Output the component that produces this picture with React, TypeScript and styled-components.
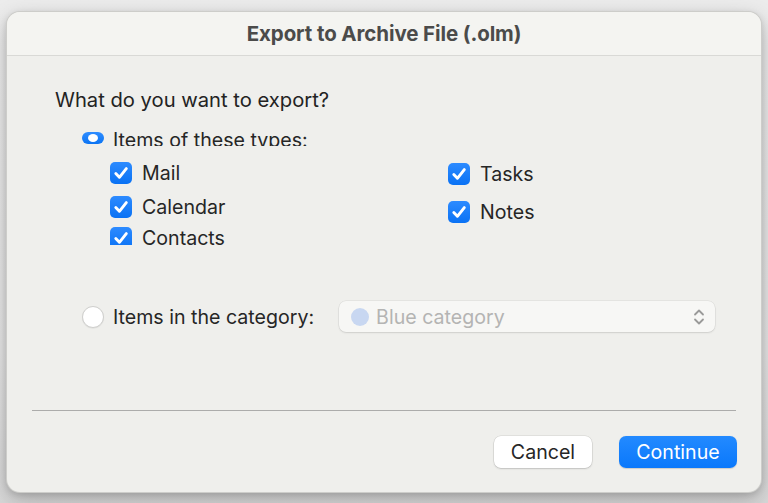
import React from "react";
import styled, { createGlobalStyle } from "styled-components";

const Global = createGlobalStyle`
  html, body { margin: 0; padding: 0; }
  body {
    width: 768px;
    height: 503px;
    overflow: hidden;
    background: linear-gradient(180deg, #ececec 0%, #e6e6e6 70%, #d9d9d9 100%);
    font-family: Inter, "Liberation Sans", sans-serif;
    -webkit-font-smoothing: antialiased;
  }
`;

const Stage = styled.div`
  padding: 11px 0 0 6px;
`;

const Window = styled.div`
  width: 756px;
  height: 482px;
  box-sizing: border-box;
  display: flex;
  flex-direction: column;
  background: #efefec;
  border-radius: 14px;
  border: 1px solid rgba(0, 0, 0, 0.14);
  box-shadow: 0 8px 22px rgba(0, 0, 0, 0.22), 0 2px 6px rgba(0, 0, 0, 0.12);
  overflow: hidden;
`;

const TitleBar = styled.div`
  height: 43px;
  flex: none;
  display: flex;
  align-items: center;
  justify-content: center;
  background: #f4f4f1;
  border-bottom: 1px solid #d9d9d6;
  color: #4b4b4a;
  font-weight: 700;
  font-size: 20.5px;
  letter-spacing: -0.1px;
`;

const Body = styled.div`
  flex: 1;
  display: flex;
  flex-direction: column;
  padding-left: 48px;
`;

const Question = styled.div`
  margin-top: 32px;
  height: 24px;
  line-height: 24px;
  font-size: 20.2px;
  color: #232323;
`;

const ClippedRow = styled.div`
  margin-top: 20px;
  margin-left: 27px;
  height: 14px;
  overflow: hidden;
  display: flex;
  align-items: flex-start;
  gap: 9px;
`;

const Pill = styled.div`
  width: 22px;
  height: 12px;
  flex: none;
  border-radius: 7px;
  background: linear-gradient(180deg, #2f8dff, #0b74f3);
  display: flex;
  align-items: center;
  justify-content: center;
  &::after {
    content: "";
    width: 10px;
    height: 8px;
    border-radius: 50%;
    background: #fff;
  }
`;

const ClippedLabel = styled.span`
  margin-top: -4px;
  line-height: 24px;
  font-size: 19.6px;
  color: #262626;
  white-space: nowrap;
`;

const Types = styled.div`
  margin-left: 55px;
  display: grid;
  grid-template-columns: 338px auto;
  align-items: start;
`;

const Column = styled.div<{ $top: number }>`
  margin-top: ${(p) => p.$top}px;
  display: flex;
  flex-direction: column;
`;

const CheckRow = styled.label<{ $top?: number }>`
  margin-top: ${(p) => p.$top ?? 0}px;
  height: 22px;
  display: flex;
  align-items: center;
  gap: 10px;
`;

const BoxClip = styled.div<{ $clip?: number }>`
  width: 22px;
  height: ${(p) => p.$clip ?? 22}px;
  align-self: flex-start;
  overflow: hidden;
  flex: none;
`;

const Box = styled.div`
  width: 22px;
  height: 22px;
  border-radius: 5px;
  background: linear-gradient(180deg, #2d8bff, #0a72f4);
  display: flex;
  align-items: center;
  justify-content: center;
`;

const Label = styled.span<{ $muted?: boolean }>`
  font-size: 19.6px;
  line-height: 22px;
  color: ${(p) => (p.$muted ? "#b4b4b3" : "#262626")};
  white-space: nowrap;
`;

const CategoryRow = styled.div`
  margin-top: 52px;
  margin-left: 27px;
  height: 31px;
  display: flex;
  align-items: center;
`;

const Radio = styled.div`
  width: 22px;
  height: 22px;
  box-sizing: border-box;
  flex: none;
  border-radius: 50%;
  background: #fff;
  border: 1px solid #cfcfcd;
  box-shadow: 0 0.5px 1px rgba(0, 0, 0, 0.08);
  margin-right: 9px;
`;

const Popup = styled.div`
  margin-left: 25px;
  width: 376px;
  height: 31px;
  box-sizing: border-box;
  border-radius: 7px;
  background: #f7f7f5;
  box-shadow: 0 0 0 0.5px rgba(0, 0, 0, 0.08), 0 1px 2px rgba(0, 0, 0, 0.1);
  display: flex;
  align-items: center;
  padding: 0 10px 0 12px;
  gap: 7px;
`;

const Dot = styled.div`
  width: 18px;
  height: 18px;
  border-radius: 50%;
  background: #c8d7f1;
  flex: none;
`;

const Spacer = styled.div`
  flex: 1;
`;

const Footer = styled.div`
  flex: none;
  margin: 0 25px;
  border-top: 1px solid #acacab;
  padding: 25px 0 24px;
  display: flex;
  justify-content: flex-end;
  gap: 28px;
`;

const Button = styled.button<{ $primary?: boolean }>`
  height: 32px;
  width: ${(p) => (p.$primary ? 118 : 98)}px;
  border: none;
  border-radius: 7px;
  margin-right: -1px;
  font-family: inherit;
  font-size: 19.6px;
  color: ${(p) => (p.$primary ? "#fff" : "#262626")};
  background: ${(p) =>
    p.$primary ? "linear-gradient(180deg, #238aff, #0a78fb)" : "#ffffff"};
  box-shadow: ${(p) =>
    p.$primary
      ? "0 0.5px 1px rgba(0,0,0,0.15)"
      : "0 0 0 0.5px rgba(0,0,0,0.12), 0 1px 2px rgba(0,0,0,0.14)"};
  padding: 0;
`;

const Check = () => (
  <svg width="22" height="22" viewBox="0 0 22 22">
    <path
      d="M5.8 11.6 L9.4 15.3 L16.3 6.6"
      fill="none"
      stroke="#fff"
      strokeWidth="2.9"
      strokeLinecap="round"
      strokeLinejoin="round"
    />
  </svg>
);

const Chevrons = () => (
  <svg width="12" height="18" viewBox="0 0 12 18">
    <path
      d="M2 6.5 L6 2.5 L10 6.5 M2 11.5 L6 15.5 L10 11.5"
      fill="none"
      stroke="#9a9a99"
      strokeWidth="1.8"
      strokeLinecap="round"
      strokeLinejoin="round"
    />
  </svg>
);

const Item = ({ label, top, clip }: { label: string; top?: number; clip?: number }) => (
  <CheckRow $top={top}>
    <BoxClip $clip={clip}>
      <Box>
        <Check />
      </Box>
    </BoxClip>
    <Label>{label}</Label>
  </CheckRow>
);

export default function App() {
  return (
    <>
      <Global />
      <Stage>
        <Window>
          <TitleBar>Export to Archive File (.olm)</TitleBar>
          <Body>
            <Question>What do you want to export?</Question>
            <ClippedRow>
              <Pill />
              <ClippedLabel>Items of these types:</ClippedLabel>
            </ClippedRow>
            <Types>
              <Column $top={16}>
                <Item label="Mail" />
                <Item label="Calendar" top={12} />
                <Item label="Contacts" top={9} clip={18} />
              </Column>
              <Column $top={17}>
                <Item label="Tasks" />
                <Item label="Notes" top={16} />
              </Column>
            </Types>
            <CategoryRow>
              <Radio />
              <Label>Items in the category:</Label>
              <Popup>
                <Dot />
                <Label $muted>Blue category</Label>
                <Spacer />
                <Chevrons />
              </Popup>
            </CategoryRow>
            <Spacer />
          </Body>
          <Footer>
            <Button>Cancel</Button>
            <Button $primary>Continue</Button>
          </Footer>
        </Window>
      </Stage>
    </>
  );
}
